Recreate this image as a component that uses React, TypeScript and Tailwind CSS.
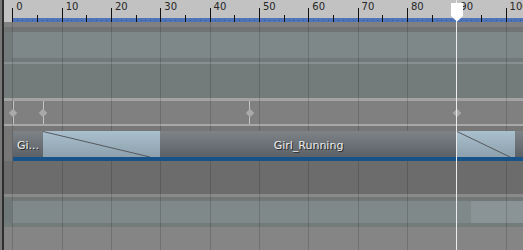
import React from "react";

const F0 = 8.3; // frame 0 in main coords
const PX = 4.933; // px per frame
const fx = (f: number) => F0 + f * PX;

const majors = Array.from({ length: 11 }, (_, i) => i * 10);
const minors = Array.from({ length: 11 }, (_, i) => i * 10 + 5);
const dots = Array.from({ length: 106 }, (_, i) => i);
const keys = [8.7, 38.7, 245.3, 452];

function Diag({ w, x2 }: { w: number; x2: number }) {
  return (
    <svg className="absolute inset-0" width={w} height={26} viewBox={`0 0 ${w} 26`}>
      <line x1={0} y1={0.5} x2={x2} y2={26} stroke="#55595d" strokeWidth={1} />
    </svg>
  );
}

export default function App() {
  return (
    <div
      className="w-[523px] h-[250px] flex overflow-hidden bg-[#808080]"
      style={{ fontFamily: '"DejaVu Sans", Verdana, sans-serif' }}
    >
      <div className="w-[2px] h-full bg-[#777777]" />
      <div className="w-[2px] h-full bg-[#2e2e2e]" />
      <div className="flex-1 relative flex flex-col">
        {/* ruler */}
        <div className="relative h-[22px] flex flex-col">
          <div className="h-[18px] bg-[#c2c2c2]" />
          <div className="h-[4px] flex">
            <div className="w-[8px] bg-[#c2c2c2]" />
            <div className="flex-1 bg-[#4f74b8]" />
          </div>
          {dots.map((d) => (
            <div
              key={"d" + d}
              className="absolute top-[20px] w-[1px] h-[1px] bg-[#36558f]"
              style={{ left: fx(d) }}
            />
          ))}
          {majors.map((f) => (
            <div
              key={"M" + f}
              className="absolute top-[8px] w-[1px] h-[14px] bg-[#111111]"
              style={{ left: fx(f) }}
            />
          ))}
          {minors.map((f) => (
            <div
              key={"m" + f}
              className="absolute top-[15px] w-[1px] h-[7px] bg-[#111111]"
              style={{ left: fx(f) }}
            />
          ))}
          {majors.map((f) => (
            <div
              key={"L" + f}
              className="absolute top-[1px] text-[10px] leading-[12px] text-[#262626] whitespace-nowrap"
              style={{ left: fx(f) + 4 }}
            >
              {f}
            </div>
          ))}
        </div>
        <div className="h-[5px] bg-[#808080]" />
        <div className="h-[5px] bg-[#707475]" />
        <div className="h-[26px] flex">
          <div className="w-[8px] bg-[#737b7b]" />
          <div className="flex-1 bg-[#7f8889]" />
        </div>
        <div className="h-[4px] bg-[#727979]" />
        <div className="h-[2px] bg-[#899091]" />
        <div className="h-[34px] bg-[#737b7b]" />
        <div className="h-[3px] bg-[#a3a3a3]" />
        {/* keyframes */}
        <div className="h-[23px] bg-[#808080] relative">
          {keys.map((k) => (
            <React.Fragment key={k}>
              <div
                className="absolute top-0 bottom-0 w-[1px] bg-[#c4c4c4] z-10"
                style={{ left: k }}
              />
              <div
                className="absolute top-[9px] w-[6px] h-[6px] rotate-45 bg-[#a9a9a9] z-10"
                style={{ left: k - 2.5 }}
              />
            </React.Fragment>
          ))}
        </div>
        <div className="h-[2px] bg-[#a8a8a8]" />
        <div className="h-[5px] bg-[#777777]" />
        {/* clips */}
        <div className="h-[30px] flex">
          <div className="w-[9px] bg-[#777777]" />
          <div className="flex-1 flex flex-col relative z-10">
            <div className="h-[26px] flex">
              <div className="w-[30px] bg-gradient-to-b from-[#7e8388] to-[#5c6167] flex items-center pl-[4px] pt-[5px] text-[11px] text-[#ececec] [text-shadow:1px_1px_0_#2a2a2a] whitespace-nowrap overflow-hidden">
                Gi...
              </div>
              <div className="w-[117px] relative bg-gradient-to-b from-[#abc0ce] to-[#8ca0ad]">
                <Diag w={117} x2={107} />
              </div>
              <div className="w-[297px] bg-gradient-to-b from-[#7e8388] to-[#5c6167] flex items-center justify-center pt-[5px] text-[11px] text-[#ececec] [text-shadow:1px_1px_0_#2a2a2a]">
                Girl_Running
              </div>
              <div className="w-[58px] relative bg-gradient-to-b from-[#abc0ce] to-[#8ca0ad]">
                <Diag w={58} x2={53} />
              </div>
              <div className="flex-1 bg-gradient-to-b from-[#7e8388] to-[#5c6167]" />
            </div>
            <div className="h-[4px] bg-[#175389]" />
          </div>
        </div>
        <div className="h-[33px] bg-[#6c6c6c]" />
        <div className="h-[3px] bg-[#8a8a8a]" />
        <div className="h-[4px] bg-[#727878]" />
        <div className="h-[22px] flex">
          <div className="w-[8px] bg-[#6f7878]" />
          <div className="flex-1 bg-[#7f898a]" />
          <div className="w-[52px] bg-[#8a9395]" />
        </div>
        <div className="h-[4px] bg-[#747b7b]" />
        <div className="flex-1 bg-[#858585]" />

        {/* grid lines */}
        {majors.map((f) => (
          <div
            key={"g" + f}
            className="absolute top-[22px] bottom-0 w-[1px] bg-black/15"
            style={{ left: fx(f) }}
          />
        ))}

        {/* playhead */}
        <div className="absolute top-0 bottom-0 left-[452px] w-[1px] bg-[#ececec] z-20" />
        <svg
          className="absolute top-[3px] left-[446.5px] z-20"
          width={12}
          height={19}
          viewBox="0 0 12 19"
        >
          <polygon points="0,0 12,0 12,13 6,18.5 0,13" fill="#ffffff" />
        </svg>
      </div>
    </div>
  );
}
